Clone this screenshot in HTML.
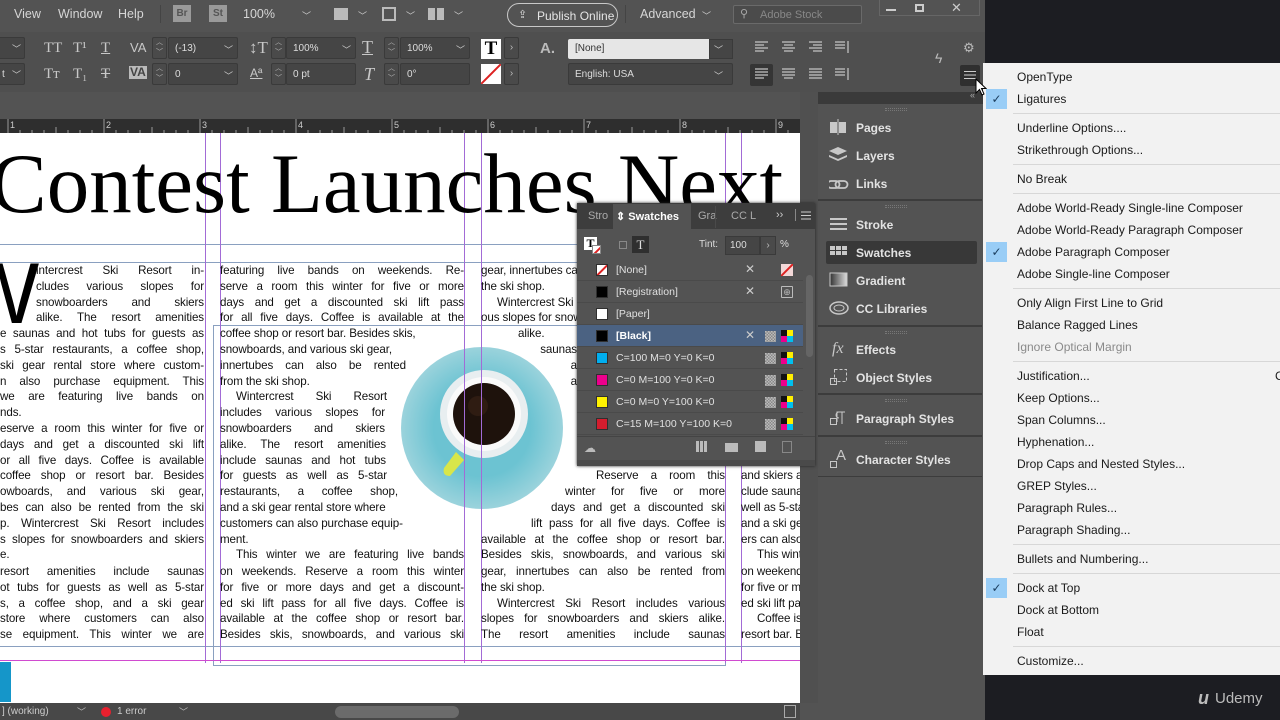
<!DOCTYPE html>
<html><head><meta charset="utf-8">
<style>
*{margin:0;padding:0;box-sizing:border-box}
body{width:1280px;height:720px;overflow:hidden;background:#535353;font-family:"Liberation Sans",sans-serif;position:relative;color:#ddd}
.a{position:absolute}
.mt{font-size:12.5px;color:#d6d6d6;top:7px}
.inp{position:absolute;background:#454545;border:1px solid #3a3a3a;border-radius:2px;height:22px;font-size:10px;color:#ddd;padding:5px 0 0 6px}
.spin{position:absolute;width:15px;height:22px;border:1px solid #3a3a3a;border-radius:2px;background:#4a4a4a;font-size:7px;color:#bbb;text-align:center;line-height:10px}
.chev{position:absolute;font-size:9px;color:#ccc}
.ic{position:absolute;font-family:"Liberation Serif",serif;color:#c8c8c8;font-size:15px}
#canvas{position:absolute;left:0;top:133px;width:800px;height:570px;background:#fff;overflow:hidden}
.col{position:absolute;top:0;height:570px}
.l{position:absolute;left:0;right:0;height:15px;overflow:hidden;font-size:11.6px;line-height:15px;color:#111;white-space:normal;text-align:justify;text-align-last:justify;font-family:"Liberation Sans",sans-serif;letter-spacing:-0.1px}
.lf{text-align:left;text-align-last:left}
.rt{text-align:right;text-align-last:right}
.vg{position:absolute;top:0;width:1px;height:530px;background:#a26bd6}
.pi{position:absolute;left:828px;font-size:12px;color:#e3e3e3;font-weight:bold}
.sep{position:absolute;left:818px;width:164px;height:2px;background:#3c3c3c}
.grip{position:absolute;left:885px;width:22px;height:3px;border-top:1px dotted #777;border-bottom:1px dotted #777}
#menu{position:absolute;left:983px;top:63px;width:297px;height:612px;background:#f2f2f2}
.mi{position:absolute;left:34px;font-size:12px;color:#1a1a1a}
.ms{position:absolute;left:30px;right:0;height:1px;background:#d7d7d7}
.ck{position:absolute;left:3px;width:21px;height:20px;background:#99cdf6;color:#1a3c5c;font-size:12px;text-align:center;line-height:20px}
.sw{position:absolute;left:0;width:226px;height:22px;border-bottom:1px solid #4a4a4a;font-size:10.5px;color:#e0e0e0}
.sw .chip{position:absolute;left:19px;top:5px;width:12px;height:12px;border:1px solid #2f2f2f}
.sw .nm{position:absolute;left:39px;top:5px}
.sw .g{position:absolute;left:188px;top:6px;width:11px;height:11px;background:repeating-conic-gradient(#888 0 25%,#bbb 0 50%) 0 0/3px 3px}
.sw .k{position:absolute;left:204px;top:5px;width:12px;height:12px;background:conic-gradient(#ffef00 0 25%,#00c0ef 0 50%,#ec008c 0 75%,#111 0)}
.sw .x{position:absolute;left:168px;top:3px;font-size:12px;color:#ccc}
</style></head><body>

<div class="a" style="left:985px;top:0;width:295px;height:720px;background:#1c1d22"></div>

<div class="a" style="left:0;top:0;width:985px;height:29px;background:#535353"></div>
<div class="a mt" style="left:14px">View</div>
<div class="a mt" style="left:58px">Window</div>
<div class="a mt" style="left:118px">Help</div>
<div class="a" style="left:160px;top:5px;width:1px;height:18px;background:#444"></div>
<div class="a" style="left:173px;top:5px;width:18px;height:17px;background:#9a9a9a;color:#555;font-size:10px;font-weight:bold;text-align:center;line-height:17px">Br</div>
<div class="a" style="left:209px;top:5px;width:18px;height:17px;background:#9a9a9a;color:#555;font-size:10px;font-weight:bold;text-align:center;line-height:17px">St</div>
<div class="a mt" style="left:243px">100%</div>
<div class="chev" style="left:302px;top:9px">﹀</div>
<div class="a" style="left:334px;top:8px;width:14px;height:12px;background:#bbb"></div>
<div class="chev" style="left:358px;top:9px">﹀</div>
<div class="a" style="left:382px;top:7px;width:14px;height:14px;border:2px solid #bbb"></div>
<div class="chev" style="left:406px;top:9px">﹀</div>
<div class="a" style="left:428px;top:8px;width:16px;height:12px;background:linear-gradient(90deg,#bbb 0 45%,transparent 45% 55%,#bbb 55%)"></div>
<div class="chev" style="left:454px;top:9px">﹀</div>
<div class="a" style="left:507px;top:3px;width:111px;height:24px;border:1px solid #c8c8c8;border-radius:12px;font-size:12px;color:#e5e5e5;padding:5px 0 0 29px">Publish Online</div>
<div class="a" style="left:518px;top:8px;font-size:11px;color:#ddd">⇪</div>
<div class="a" style="left:625px;top:5px;width:1px;height:18px;background:#444"></div>
<div class="a mt" style="left:640px">Advanced</div>
<div class="chev" style="left:702px;top:9px">﹀</div>
<div class="a" style="left:733px;top:5px;width:129px;height:19px;border:1px solid #6a6a6a;border-radius:2px;background:#4b4b4b;font-size:11px;color:#888;padding:3px 0 0 26px">Adobe Stock</div>
<div class="a" style="left:740px;top:7px;font-size:11px;color:#aaa">⚲</div>
<div class="a" style="left:879px;top:0;width:101px;height:16px;border:1px solid #666;border-top:none"></div>
<div class="a" style="left:886px;top:9px;width:10px;height:2px;background:#ccc"></div>
<div class="a" style="left:915px;top:4px;width:9px;height:8px;border:2px solid #ccc"></div>
<div class="a" style="left:951px;top:0;font-size:13px;color:#ccc">✕</div>

<div class="a" style="left:0;top:32px;width:985px;height:60px;background:#4f4f4f"></div>
<div class="inp" style="left:-5px;top:37px;width:30px"></div><div class="chev" style="left:12px;top:42px">﹀</div>
<div class="inp" style="left:-5px;top:63px;width:30px">t</div><div class="chev" style="left:12px;top:68px">﹀</div>
<div class="ic" style="left:44px;top:40px">TT</div><div class="ic" style="left:73px;top:40px">T¹</div><div class="ic" style="left:101px;top:40px;text-decoration:underline">T</div>
<div class="ic" style="left:44px;top:66px">Tт</div><div class="ic" style="left:73px;top:66px">T₁</div><div class="ic" style="left:101px;top:66px;text-decoration:line-through">T</div>
<div class="ic" style="left:130px;top:40px;font-family:'Liberation Sans';font-size:13px">VA</div>
<div class="ic" style="left:129px;top:66px;font-family:'Liberation Sans';font-size:12px;background:#bbb;color:#444;font-weight:bold;line-height:13px;padding:0 1px">VA</div>
<div class="spin" style="left:152px;top:37px">︿<br>﹀</div><div class="inp" style="left:168px;top:37px;width:70px">(-13)</div><div class="chev" style="left:224px;top:43px">﹀</div>
<div class="spin" style="left:152px;top:63px">︿<br>﹀</div><div class="inp" style="left:168px;top:63px;width:70px">0</div><div class="chev" style="left:224px;top:69px">﹀</div>
<div class="ic" style="left:249px;top:38px;font-size:17px">↕T</div>
<div class="ic" style="left:250px;top:66px;font-family:'Liberation Sans';font-size:12px;text-decoration:underline">Aª</div>
<div class="spin" style="left:271px;top:37px">︿<br>﹀</div><div class="inp" style="left:286px;top:37px;width:70px">100%</div><div class="chev" style="left:342px;top:43px">﹀</div>
<div class="spin" style="left:271px;top:63px">︿<br>﹀</div><div class="inp" style="left:286px;top:63px;width:70px">0 pt</div>
<div class="ic" style="left:362px;top:37px;font-size:18px;text-decoration:underline">T</div>
<div class="ic" style="left:364px;top:64px;font-size:18px;font-style:italic">T</div>
<div class="spin" style="left:384px;top:37px">︿<br>﹀</div><div class="inp" style="left:400px;top:37px;width:70px">100%</div><div class="chev" style="left:456px;top:43px">﹀</div>
<div class="spin" style="left:384px;top:63px">︿<br>﹀</div><div class="inp" style="left:400px;top:63px;width:70px">0°</div>
<div class="a" style="left:481px;top:39px;width:20px;height:20px;background:#fff;color:#000;font-family:'Liberation Serif';font-weight:bold;font-size:19px;text-align:center;line-height:20px">T</div>
<div class="a" style="left:481px;top:64px;width:20px;height:20px;background:#fff;overflow:hidden"><div style="position:absolute;left:-4px;top:9px;width:28px;height:2px;background:#d22;transform:rotate(-45deg)"></div></div>
<div class="spin" style="left:504px;top:37px;height:22px;font-size:10px;line-height:20px">›</div>
<div class="spin" style="left:504px;top:63px;height:22px;font-size:10px;line-height:20px">›</div>
<div class="a" style="left:540px;top:40px;font-size:15px;font-weight:bold;color:#bbb">A.</div>
<div class="a" style="left:568px;top:39px;width:165px;height:20px;background:#e6e6e6;border-radius:2px;font-size:10px;color:#333;padding:4px 0 0 7px">[None]</div>
<div class="a" style="left:709px;top:39px;width:24px;height:20px;background:#454545;border:1px solid #3a3a3a"></div><div class="chev" style="left:714px;top:43px">﹀</div>
<div class="inp" style="left:568px;top:63px;width:165px">English: USA</div><div class="chev" style="left:714px;top:69px">﹀</div>
<div class="a" style="left:750px;top:64px;width:23px;height:22px;background:#353535;border-radius:2px"></div>
<svg class="a" style="left:755px;top:41px" width="100" height="42" stroke="#c9c9c9" stroke-width="1.2">
<g><line x1="0" y1="1" x2="13" y2="1"/><line x1="0" y1="4" x2="9" y2="4"/><line x1="0" y1="7" x2="13" y2="7"/><line x1="0" y1="10" x2="9" y2="10"/></g>
<g transform="translate(27,0)"><line x1="0" y1="1" x2="13" y2="1"/><line x1="2" y1="4" x2="11" y2="4"/><line x1="0" y1="7" x2="13" y2="7"/><line x1="2" y1="10" x2="11" y2="10"/></g>
<g transform="translate(54,0)"><line x1="0" y1="1" x2="13" y2="1"/><line x1="4" y1="4" x2="13" y2="4"/><line x1="0" y1="7" x2="13" y2="7"/><line x1="4" y1="10" x2="13" y2="10"/></g>
<g transform="translate(80,0)"><line x1="0" y1="1" x2="10" y2="1"/><line x1="0" y1="4" x2="10" y2="4"/><line x1="0" y1="7" x2="10" y2="7"/><line x1="13" y1="0" x2="13" y2="12"/></g>
<g transform="translate(0,27)"><line x1="0" y1="1" x2="13" y2="1"/><line x1="0" y1="4" x2="13" y2="4"/><line x1="0" y1="7" x2="13" y2="7"/><line x1="0" y1="10" x2="9" y2="10"/></g>
<g transform="translate(27,27)"><line x1="0" y1="1" x2="13" y2="1"/><line x1="0" y1="4" x2="13" y2="4"/><line x1="0" y1="7" x2="13" y2="7"/><line x1="2" y1="10" x2="11" y2="10"/></g>
<g transform="translate(54,27)"><line x1="0" y1="1" x2="13" y2="1"/><line x1="0" y1="4" x2="13" y2="4"/><line x1="0" y1="7" x2="13" y2="7"/><line x1="0" y1="10" x2="13" y2="10"/></g>
<g transform="translate(80,27)"><line x1="0" y1="1" x2="10" y2="1"/><line x1="0" y1="4" x2="10" y2="4"/><line x1="0" y1="7" x2="10" y2="7"/><line x1="13" y1="0" x2="13" y2="12"/></g>
</svg>
<div class="a" style="left:935px;top:50px;font-size:14px;color:#bbb">ϟ</div>
<div class="a" style="left:963px;top:40px;font-size:13px;color:#bbb">⚙</div>
<div class="a" style="left:960px;top:65px;width:20px;height:21px;background:#2f2f2f;border-radius:2px"></div>
<svg class="a" style="left:964px;top:70px" width="12" height="10" stroke="#ccc"><line x1="0" y1="1.5" x2="12" y2="1.5"/><line x1="0" y1="5" x2="12" y2="5"/><line x1="0" y1="8.5" x2="12" y2="8.5"/></svg>

<div class="a" style="left:0;top:119px;width:802px;height:14px;background:#2e2e2e"></div>
<svg class="a" style="left:0;top:119px" width="802" height="14">
<g fill="#ccc" font-size="9" font-family="Liberation Sans">
<text x="10" y="9">1</text><text x="106" y="9">2</text><text x="202" y="9">3</text><text x="298" y="9">4</text><text x="394" y="9">5</text><text x="490" y="9">6</text><text x="586" y="9">7</text><text x="682" y="9">8</text><text x="778" y="9">9</text></g>
<g stroke="#999">
<path d="M8 0V14M104 0V14M200 0V14M296 0V14M392 0V14M488 0V14M584 0V14M680 0V14M776 0V14"/>
<path d="M20 11V14M32 11V14M44 11V14M56 8V14M68 11V14M80 11V14M92 11V14M116 11V14M128 11V14M140 11V14M152 8V14M164 11V14M176 11V14M188 11V14M212 11V14M224 11V14M236 11V14M248 8V14M260 11V14M272 11V14M284 11V14M308 11V14M320 11V14M332 11V14M344 8V14M356 11V14M368 11V14M380 11V14M404 11V14M416 11V14M428 11V14M440 8V14M452 11V14M464 11V14M476 11V14M500 11V14M512 11V14M524 11V14M536 8V14M548 11V14M560 11V14M572 11V14M596 11V14M608 11V14M620 11V14M632 8V14M644 11V14M656 11V14M668 11V14M692 11V14M704 11V14M716 11V14M728 8V14M740 11V14M752 11V14M764 11V14M788 11V14"/></g>
</svg>

<div id="canvas">
 <div class="a" style="left:0;top:111px;width:800px;height:1px;background:#8aa0c0"></div>
 <div class="a" style="left:0;top:129px;width:800px;height:1px;background:#8aa0c0"></div>
 <div class="a" style="left:213px;top:192px;width:513px;height:341px;border:1px solid #8aa0c0"></div>
 <div class="a" style="left:0;top:513px;width:800px;height:1px;background:#8aa0c0"></div>
 <div class="vg" style="left:205px"></div><div class="vg" style="left:220px"></div>
 <div class="vg" style="left:464px"></div><div class="vg" style="left:481px"></div>
 <div class="vg" style="left:725px"></div><div class="vg" style="left:741px"></div>
 <div class="a" style="left:0;top:527px;width:800px;height:1px;background:#d04bd0"></div>
 <div class="a" style="left:0;top:529px;width:11px;height:40px;background:#1596c9"></div>

 <div class="a" style="left:-10px;top:9px;font-family:'Liberation Serif',serif;font-size:85px;line-height:85px;color:#000;white-space:nowrap">Contest Launches Next i</div>

 <div class="a" style="left:-42px;top:118px;font-family:'Liberation Sans',sans-serif;font-size:86px;line-height:86px;color:#000">W</div>

 <div class="col" style="left:0;width:204px">
  <div class="l" style="top:130px;left:36px">intercrest Ski Resort in-</div>
  <div class="l" style="top:145.8px;left:36px">cludes various slopes for</div>
  <div class="l" style="top:161.6px;left:36px">snowboarders and skiers</div>
  <div class="l" style="top:177.4px;left:36px">alike. The resort amenities</div>
  <div class="l" style="top:193.2px">e saunas and hot tubs for guests as</div>
  <div class="l" style="top:209px">s 5-star restaurants, a coffee shop,</div>
  <div class="l" style="top:224.8px">ski gear rental store where custom-</div>
  <div class="l" style="top:240.6px">n also purchase equipment. This</div>
  <div class="l" style="top:256.4px">we are featuring live bands on</div>
  <div class="l lf" style="top:272.2px">nds.</div>
  <div class="l" style="top:288px">eserve a room this winter for five or</div>
  <div class="l" style="top:303.8px">days and get a discounted ski lift</div>
  <div class="l" style="top:319.6px">or all five days. Coffee is available</div>
  <div class="l" style="top:335.4px">coffee shop or resort bar. Besides</div>
  <div class="l" style="top:351.2px">owboards, and various ski gear,</div>
  <div class="l" style="top:367px">bes can also be rented from the ski</div>
  <div class="l" style="top:382.8px">p. Wintercrest Ski Resort includes</div>
  <div class="l" style="top:398.6px">s slopes for snowboarders and skiers</div>
  <div class="l lf" style="top:414.4px">e.</div>
  <div class="l" style="top:431px">resort amenities include saunas</div>
  <div class="l" style="top:446.8px">ot tubs for guests as well as 5-star</div>
  <div class="l" style="top:462.6px">s, a coffee shop, and a ski gear</div>
  <div class="l" style="top:478.4px">store where customers can also</div>
  <div class="l" style="top:494.2px">se equipment. This winter we are</div>
 </div>
 <div class="col" style="left:220px;width:244px">
  <div class="l" style="top:130px">featuring live bands on weekends. Re-</div>
  <div class="l" style="top:145.8px">serve a room this winter for five or more</div>
  <div class="l" style="top:161.6px">days and get a discounted ski lift pass</div>
  <div class="l" style="top:177.4px">for all five days. Coffee is available at the</div>
  <div class="l lf" style="top:193.2px">coffee shop or resort bar. Besides skis,</div>
  <div class="l lf" style="top:209px">snowboards, and various ski gear,</div>
  <div class="l" style="top:224.8px;right:58px">innertubes can also be rented</div>
  <div class="l lf" style="top:240.6px">from the ski shop.</div>
  <div class="l" style="top:256.4px;left:16px;right:77px">Wintercrest Ski Resort</div>
  <div class="l" style="top:272.2px;right:79px">includes various slopes for</div>
  <div class="l" style="top:288px;right:79px">snowboarders and skiers</div>
  <div class="l" style="top:303.8px;right:78px">alike. The resort amenities</div>
  <div class="l" style="top:319.6px;right:78px">include saunas and hot tubs</div>
  <div class="l" style="top:335.4px;right:77px">for guests as well as 5-star</div>
  <div class="l" style="top:351.2px;right:66px">restaurants, a coffee shop,</div>
  <div class="l lf" style="top:367px">and a ski gear rental store where</div>
  <div class="l lf" style="top:382.8px">customers can also purchase equip-</div>
  <div class="l lf" style="top:398.6px">ment.</div>
  <div class="l" style="top:414.4px;left:16px">This winter we are featuring live bands</div>
  <div class="l" style="top:431px">on weekends. Reserve a room this winter</div>
  <div class="l" style="top:446.8px">for five or more days and get a discount-</div>
  <div class="l" style="top:462.6px">ed ski lift pass for all five days. Coffee is</div>
  <div class="l" style="top:478.4px">available at the coffee shop or resort bar.</div>
  <div class="l" style="top:494.2px">Besides skis, snowboards, and various ski</div>
 </div>
 <div class="col" style="left:481px;width:244px">
  <div class="l lf" style="top:130px">gear, innertubes can also be rented from</div>
  <div class="l lf" style="top:145.8px">the ski shop.</div>
  <div class="l lf" style="top:161.6px;left:16px">Wintercrest Ski Resort includes vari</div>
  <div class="l lf" style="top:177.4px">ous slopes for snowboarders and ski</div>
  <div class="l" style="top:193.2px;left:37px">alike. The resort</div>
  <div class="l rt" style="top:209px;left:40px;right:148px">saunas</div>
  <div class="l rt" style="top:224.8px;left:60px;right:148px">a</div>
  <div class="l rt" style="top:240.6px;left:60px;right:148px">a</div>
  <div class="l" style="top:335.4px;left:115px">Reserve a room this</div>
  <div class="l" style="top:351.2px;left:84px">winter for five or more</div>
  <div class="l" style="top:367px;left:70px">days and get a discounted ski</div>
  <div class="l" style="top:382.8px;left:50px">lift pass for all five days. Coffee is</div>
  <div class="l" style="top:398.6px">available at the coffee shop or resort bar.</div>
  <div class="l" style="top:414.4px">Besides skis, snowboards, and various ski</div>
  <div class="l" style="top:431px">gear, innertubes can also be rented from</div>
  <div class="l lf" style="top:446.8px">the ski shop.</div>
  <div class="l" style="top:462.6px;left:16px">Wintercrest Ski Resort includes various</div>
  <div class="l" style="top:478.4px">slopes for snowboarders and skiers alike.</div>
  <div class="l" style="top:494.2px">The resort amenities include saunas</div>
 </div>
 <div class="col" style="left:741px;width:120px">
  <div class="l lf" style="top:335.4px">and skiers alike. The</div>
  <div class="l lf" style="top:351.2px">clude saunas and</div>
  <div class="l lf" style="top:367px">well as 5-star res</div>
  <div class="l lf" style="top:382.8px">and a ski gear re</div>
  <div class="l lf" style="top:398.6px">ers can also pur</div>
  <div class="l lf" style="top:414.4px;left:16px">This winter we</div>
  <div class="l lf" style="top:431px">on weekends. Re</div>
  <div class="l lf" style="top:446.8px">for five or more</div>
  <div class="l lf" style="top:462.6px">ed ski lift pass fo</div>
  <div class="l lf" style="top:478.4px;left:16px">Coffee is ava</div>
  <div class="l lf" style="top:494.2px">resort bar. Bes</div>
 </div>

 <svg class="a" style="left:398px;top:211px" width="170" height="170">
  <defs><radialGradient id="pl" cx="0.5" cy="0.5" r="0.5"><stop offset="0.6" stop-color="#6cc3d2"/><stop offset="1" stop-color="#9bd3dc"/></radialGradient></defs>
  <circle cx="84" cy="84" r="81" fill="url(#pl)"/>
  <path d="M58 108 L46 124 Q44 132 52 132 L66 116 Z" fill="#d8e64a"/>
  <circle cx="86" cy="70" r="44" fill="#e8eef0"/>
  <circle cx="86" cy="70" r="37" fill="#fafafa"/>
  <circle cx="86" cy="70" r="31" fill="#1e120c"/>
  <circle cx="80" cy="62" r="10" fill="#3a2318" opacity="0.6"/>
 </svg>
 <div class="vg" style="left:464px;top:200px;height:200px"></div><div class="vg" style="left:481px;top:200px;height:200px"></div>
</div>

<div class="a" style="left:800px;top:92px;width:18px;height:611px;background:#505050"></div>

<div class="a" style="left:0;top:703px;width:800px;height:17px;background:#484848"></div>
<div class="a" style="left:2px;top:706px;font-size:10px;color:#ccc">] (working)</div>
<div class="a" style="left:77px;top:705px;font-size:9px;color:#bbb">﹀</div>
<div class="a" style="left:101px;top:707px;width:10px;height:10px;border-radius:5px;background:#e8202e"></div>
<div class="a" style="left:117px;top:706px;font-size:10px;color:#ccc">1 error</div>
<div class="a" style="left:179px;top:705px;font-size:9px;color:#bbb">﹀</div>
<div class="a" style="left:335px;top:706px;width:124px;height:12px;border-radius:6px;background:#6b6b6b"></div>
<div class="a" style="left:784px;top:705px;width:12px;height:13px;border:1px solid #aaa"></div>

<div class="a" style="left:818px;top:92px;width:167px;height:12px;background:#3a3a3a"></div>
<div class="a" style="left:970px;top:90px;font-size:9px;color:#aaa">«</div>
<div class="grip" style="top:108px"></div>
<div class="pi" style="left:856px;top:121px">Pages</div>
<div class="pi" style="left:856px;top:149px">Layers</div>
<div class="pi" style="left:856px;top:177px">Links</div>
<svg class="a" style="left:829px;top:119px" width="20" height="80" fill="#c8c8c8">
<rect x="1" y="3" width="7" height="11"/><rect x="10" y="3" width="7" height="11"/><rect x="8.5" y="0" width="1" height="16"/>
<path d="M9 28 L18 32 L9 36 L0 32Z"/><path d="M0 36 L9 40 L18 36 L18 38 L9 42 L0 38Z"/>
<path d="M2 62 h5 a3.5 3.5 0 0 1 0 7 h-5 a3.5 3.5 0 0 1 0 -7Z M10 62 h5 a3.5 3.5 0 0 1 0 7 h-5 a3.5 3.5 0 0 1 0-7Z" fill="none" stroke="#c8c8c8" stroke-width="1.8"/>
</svg>
<div class="sep" style="top:199px"></div>
<div class="grip" style="top:205px"></div>
<div class="a" style="left:826px;top:241px;width:151px;height:23px;background:#383838;border-radius:2px"></div>
<div class="pi" style="left:856px;top:218px">Stroke</div>
<div class="pi" style="left:856px;top:246px">Swatches</div>
<div class="pi" style="left:856px;top:274px">Gradient</div>
<div class="pi" style="left:856px;top:302px">CC Libraries</div>
<svg class="a" style="left:829px;top:217px" width="22" height="105">
<g stroke="#c8c8c8" stroke-width="2"><line x1="1" y1="2" x2="18" y2="2"/><line x1="1" y1="7" x2="18" y2="7"/><line x1="1" y1="12" x2="18" y2="12"/></g>
<g fill="#c8c8c8"><rect x="1" y="29" width="5" height="4"/><rect x="7" y="29" width="5" height="4"/><rect x="13" y="29" width="5" height="4"/><rect x="1" y="34" width="5" height="4"/><rect x="7" y="34" width="5" height="4"/><rect x="13" y="34" width="5" height="4"/></g>
<defs><linearGradient id="gg"><stop offset="0" stop-color="#333"/><stop offset="1" stop-color="#ddd"/></linearGradient></defs>
<rect x="1" y="56" width="17" height="13" fill="url(#gg)" stroke="#c8c8c8"/>
<ellipse cx="10" cy="91" rx="9" ry="6" fill="none" stroke="#c8c8c8" stroke-width="1.5"/><ellipse cx="10" cy="91" rx="5" ry="3" fill="none" stroke="#c8c8c8"/>
</svg>
<div class="sep" style="top:325px"></div>
<div class="grip" style="top:331px"></div>
<div class="pi" style="left:856px;top:343px">Effects</div>
<div class="pi" style="left:856px;top:371px">Object Styles</div>
<div class="a" style="left:832px;top:340px;font-size:16px;font-style:italic;color:#c8c8c8;font-family:'Liberation Serif'">fx</div>
<svg class="a" style="left:829px;top:368px" width="20" height="20" fill="none" stroke="#c8c8c8"><rect x="5.5" y="1.5" width="12" height="12" stroke-dasharray="3 2"/><rect x="1.5" y="10.5" width="6" height="6"/></svg>
<div class="sep" style="top:393px"></div>
<div class="grip" style="top:399px"></div>
<div class="pi" style="left:856px;top:412px">Paragraph Styles</div>
<svg class="a" style="left:829px;top:408px" width="20" height="20" fill="none" stroke="#c8c8c8"><rect x="1.5" y="10.5" width="6" height="6"/><path d="M8 14 V4 h8 M13 4 V16 M10 4 a3 3 0 0 0 0 6"/></svg>
<div class="sep" style="top:435px"></div>
<div class="grip" style="top:441px"></div>
<div class="pi" style="left:856px;top:453px">Character Styles</div>
<div class="a" style="left:836px;top:447px;font-size:15px;color:#c8c8c8">A</div>
<svg class="a" style="left:829px;top:458px" width="12" height="12" fill="none" stroke="#c8c8c8"><rect x="1.5" y="3.5" width="6" height="6"/></svg>
<div class="sep" style="top:476px;height:1px"></div>

<div class="a" style="left:577px;top:203px;width:238px;height:263px;background:#535353;box-shadow:0 0 3px #222"></div>
<div class="a" style="left:577px;top:203px;width:238px;height:26px;background:#3d3d3d"></div>
<div class="a" style="left:613px;top:204px;width:78px;height:25px;background:#535353"></div>
<div class="a" style="left:588px;top:210px;font-size:11px;color:#aaa">Stro</div>
<div class="a" style="left:616px;top:210px;font-size:11px;color:#fff;font-weight:bold">⇕ Swatches</div>
<div class="a" style="left:698px;top:210px;font-size:11px;color:#aaa">Gra</div>
<div class="a" style="left:715px;top:206px;width:1px;height:22px;background:#4a4a4a"></div>
<div class="a" style="left:731px;top:210px;font-size:11px;color:#aaa">CC L</div>
<div class="a" style="left:776px;top:209px;font-size:11px;color:#ccc">››</div>
<div class="a" style="left:795px;top:209px;width:1px;height:12px;background:#888"></div>
<svg class="a" style="left:801px;top:211px" width="10" height="9" stroke="#ccc"><line x1="0" y1="1" x2="10" y2="1"/><line x1="0" y1="4.5" x2="10" y2="4.5"/><line x1="0" y1="8" x2="10" y2="8"/></svg>
<div class="a" style="left:584px;top:237px;width:13px;height:13px;background:#fff;color:#000;font-weight:bold;font-size:12px;line-height:13px;text-align:center;font-family:'Liberation Serif'">T</div>
<div class="a" style="left:592px;top:245px;width:9px;height:9px;background:#fff;overflow:hidden;border:1px solid #888"><div style="position:absolute;left:-2px;top:3px;width:14px;height:1.5px;background:#d22;transform:rotate(-45deg)"></div></div>
<div class="a" style="left:619px;top:241px;width:8px;height:8px;border:1px solid #888"></div>
<div class="a" style="left:632px;top:236px;width:17px;height:17px;background:#2f2f2f;font-family:'Liberation Serif';color:#ddd;font-size:13px;text-align:center;line-height:17px">T</div>
<div class="a" style="left:699px;top:239px;font-size:10px;color:#ddd">Tint:</div>
<div class="a" style="left:725px;top:236px;width:35px;height:19px;background:#454545;border:1px solid #3a3a3a;font-size:10px;padding:3px 0 0 4px;color:#ddd">100</div>
<div class="a" style="left:760px;top:236px;width:16px;height:19px;background:#4a4a4a;border:1px solid #3a3a3a;font-size:10px;text-align:center;line-height:17px;color:#bbb">›</div>
<div class="a" style="left:780px;top:239px;font-size:10px;color:#ddd">%</div>

<div class="a" style="left:577px;top:259px;width:228px;height:176px;overflow:hidden">
 <div class="sw" style="top:0"><div class="chip" style="background:#fff;overflow:hidden"><div style="position:absolute;left:-3px;top:4px;width:17px;height:2px;background:#d22;transform:rotate(-45deg)"></div></div><div class="nm">[None]</div><div class="x">✕</div><div style="position:absolute;left:204px;top:5px;width:12px;height:12px;background:#f3d8d8;overflow:hidden"><div style="position:absolute;left:-3px;top:5px;width:18px;height:1.5px;background:#d22;transform:rotate(-45deg)"></div></div></div>
 <div class="sw" style="top:22px"><div class="chip" style="background:#000"></div><div class="nm">[Registration]</div><div class="x">✕</div><div style="position:absolute;left:204px;top:5px;width:12px;height:12px;border:1px solid #bbb;border-radius:1px;font-size:9px;line-height:10px;text-align:center;color:#bbb">⊕</div></div>
 <div class="sw" style="top:44px"><div class="chip" style="background:#fff"></div><div class="nm">[Paper]</div></div>
 <div class="sw" style="top:66px;background:#4b6282"><div class="chip" style="background:#000"></div><div class="nm" style="font-weight:bold;color:#fff">[Black]</div><div class="x">✕</div><div class="g"></div><div class="k"></div></div>
 <div class="sw" style="top:88px"><div class="chip" style="background:#00aeef"></div><div class="nm">C=100 M=0 Y=0 K=0</div><div class="g"></div><div class="k"></div></div>
 <div class="sw" style="top:110px"><div class="chip" style="background:#ec008c"></div><div class="nm">C=0 M=100 Y=0 K=0</div><div class="g"></div><div class="k"></div></div>
 <div class="sw" style="top:132px"><div class="chip" style="background:#fff200"></div><div class="nm">C=0 M=0 Y=100 K=0</div><div class="g"></div><div class="k"></div></div>
 <div class="sw" style="top:154px"><div class="chip" style="background:#d41d2e"></div><div class="nm">C=15 M=100 Y=100 K=0</div><div class="g"></div><div class="k"></div></div>
</div>
<div class="a" style="left:806px;top:275px;width:7px;height:82px;border-radius:4px;background:#656565"></div>
<div class="a" style="left:577px;top:436px;width:238px;height:1px;background:#444"></div>
<div class="a" style="left:584px;top:441px;font-size:12px;color:#bbb">☁</div>
<div class="a" style="left:696px;top:441px;width:11px;height:11px;background:repeating-linear-gradient(90deg,#bbb 0 3px,transparent 3px 4px)"></div>
<div class="a" style="left:725px;top:443px;width:13px;height:9px;background:#bbb"></div>
<div class="a" style="left:755px;top:441px;width:11px;height:11px;background:#bbb"></div>
<div class="a" style="left:782px;top:441px;width:10px;height:12px;border:1px solid #888"></div>
<div class="a" style="left:577px;top:460px;width:238px;height:6px;background:#4a4a4a"></div>

<div id="menu">
 <div class="mi" style="top:7px">OpenType</div>
 <div class="ck" style="top:26px">✓</div><div class="mi" style="top:29px">Ligatures</div>
 <div class="ms" style="top:50px"></div>
 <div class="mi" style="top:58px">Underline Options....</div>
 <div class="mi" style="top:80px">Strikethrough Options...</div>
 <div class="ms" style="top:101px"></div>
 <div class="mi" style="top:109px">No Break</div>
 <div class="ms" style="top:130px"></div>
 <div class="mi" style="top:138px">Adobe World-Ready Single-line Composer</div>
 <div class="mi" style="top:160px">Adobe World-Ready Paragraph Composer</div>
 <div class="ck" style="top:179px">✓</div><div class="mi" style="top:182px">Adobe Paragraph Composer</div>
 <div class="mi" style="top:204px">Adobe Single-line Composer</div>
 <div class="ms" style="top:225px"></div>
 <div class="mi" style="top:233px">Only Align First Line to Grid</div>
 <div class="mi" style="top:255px">Balance Ragged Lines</div>
 <div class="mi" style="top:277px;color:#8a8a8a">Ignore Optical Margin</div>
 <div class="ms" style="top:298px"></div>
 <div class="mi" style="top:306px">Justification...</div>
 <div class="mi" style="top:328px">Keep Options...</div>
 <div class="mi" style="top:350px">Span Columns...</div>
 <div class="mi" style="top:372px">Hyphenation...</div>
 <div class="mi" style="top:394px">Drop Caps and Nested Styles...</div>
 <div class="mi" style="top:416px">GREP Styles...</div>
 <div class="mi" style="top:438px">Paragraph Rules...</div>
 <div class="mi" style="top:460px">Paragraph Shading...</div>
 <div class="ms" style="top:481px"></div>
 <div class="mi" style="top:489px">Bullets and Numbering...</div>
 <div class="ms" style="top:510px"></div>
 <div class="ck" style="top:515px">✓</div><div class="mi" style="top:518px">Dock at Top</div>
 <div class="mi" style="top:540px">Dock at Bottom</div>
 <div class="mi" style="top:562px">Float</div>
 <div class="ms" style="top:583px"></div>
 <div class="mi" style="top:591px">Customize...</div>
 <div class="a" style="left:292px;top:306px;font-size:12px;color:#1a1a1a">C</div>
</div>

<svg class="a" style="left:975px;top:78px" width="12" height="20"><path d="M1 1 L1 15 L4.5 11.5 L7 17 L9 16 L6.5 10.5 L11 10.5 Z" fill="#fff" stroke="#000"/></svg>

<div class="a" style="left:1198px;top:688px;font-size:18px;color:#bbb;font-style:italic;font-weight:bold">u</div>
<div class="a" style="left:1215px;top:690px;font-size:15px;color:#bbb">Udemy</div>
</body></html>
